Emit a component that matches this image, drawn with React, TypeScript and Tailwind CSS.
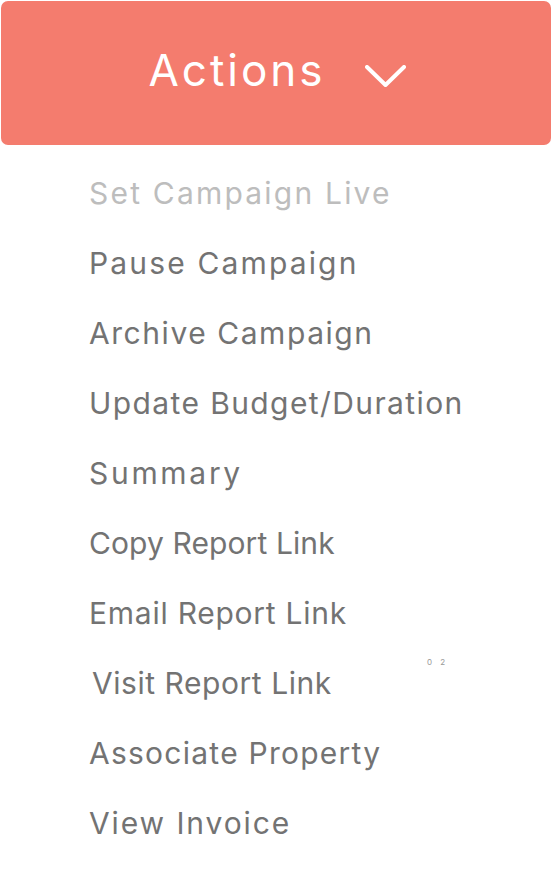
import React from "react";

const items: { t: string; cls: string }[] = [
  { t: "Pause Campaign", cls: "tracking-[2.15px] pl-[88px]" },
  { t: "Archive Campaign", cls: "tracking-[1.55px] pl-[88px]" },
  { t: "Update Budget/Duration", cls: "tracking-[1.4px] pl-[88px]" },
  { t: "Summary", cls: "tracking-[2.7px] pl-[88px]" },
  { t: "Copy Report Link", cls: "tracking-[0.1px] pl-[88px]" },
  { t: "Email Report Link", cls: "tracking-[0.75px] pl-[88px]" },
  { t: "Visit Report Link", cls: "tracking-[0.55px] pl-[91px]" },
  { t: "Associate Property", cls: "tracking-[1.25px] pl-[88px]" },
  { t: "View Invoice", cls: "tracking-[1.9px] pl-[88px]" },
];

export default function App() {
  return (
    <div className="w-[552px] h-[890px] bg-white p-[1px]" style={{ fontFamily: "Inter, 'Open Sans', sans-serif" }}>
      <div className="h-[144px] w-[550px] rounded-[7px] bg-[#f47c6e] flex items-center justify-center gap-[39px] pl-[2px]">
        <span className="text-white text-[44px] leading-none font-normal tracking-[3px] mb-[7px]">Actions</span>
        <svg width="41" height="23" viewBox="0 0 41 23" fill="none" className="mt-[7px]">
          <path d="M2 2 L20.5 20 L39 2" stroke="white" strokeWidth="4" strokeLinecap="round" strokeLinejoin="round" />
        </svg>
      </div>
      <div className="mt-[13px] flex flex-col">
        <div className="h-[70px] flex items-center pl-[88px] text-[30px] tracking-[2.2px] text-[#bdbdbd]">Set Campaign Live</div>
        {items.map(({ t, cls }) => (
          <div key={t} className={`relative h-[70px] flex items-center text-[30px] text-[#737373] ${cls}`}>
            {t}
            {t === "Visit Report Link" && (
              <span className="absolute left-[426px] top-[10px] text-[8px] leading-none text-[#999] tracking-[3px]">0 2</span>
            )}
          </div>
        ))}
      </div>
    </div>
  );
}
